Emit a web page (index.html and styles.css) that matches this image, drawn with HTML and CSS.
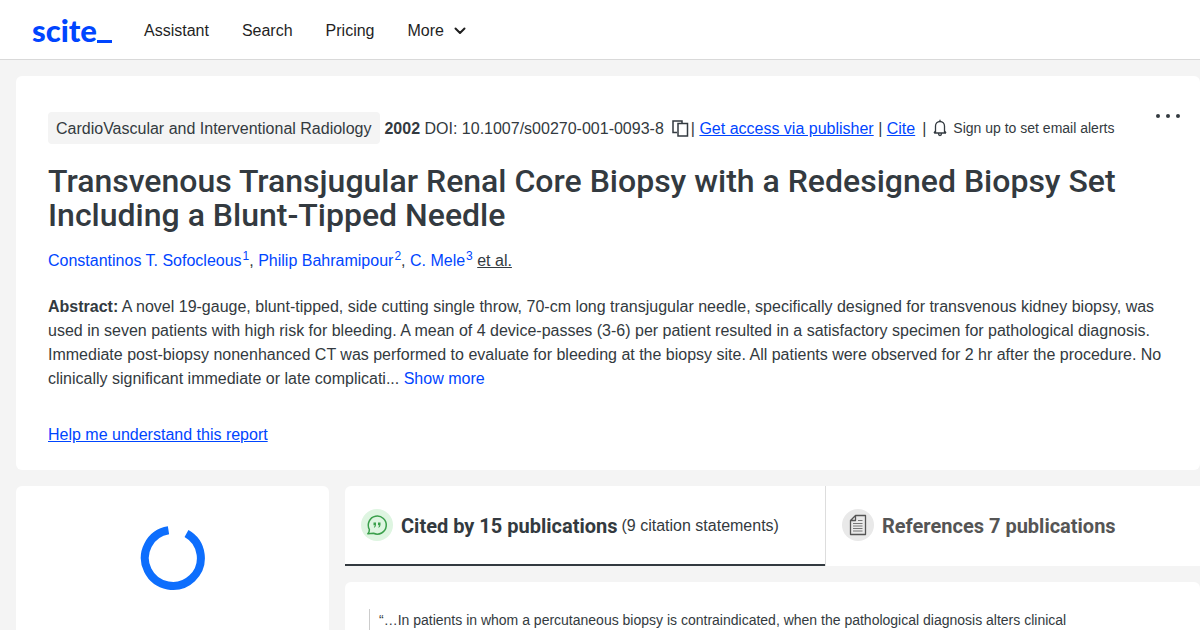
FILE: index.html
```html
<!DOCTYPE html>
<html lang="en">
<head>
  <meta charset="UTF-8" />
  <meta name="viewport" content="width=device-width, initial-scale=1.0"/>
  <title>Transvenous Transjugular Renal Core Biopsy - scite</title>
  <link rel="stylesheet" href="styles.css">
</head>
<body>
  <header class="navbar">
    <a class="logo" href="#">scite<span class="logo-bar"></span></a>
    <nav class="nav-links">
      <a href="#">Assistant</a>
      <a href="#">Search</a>
      <a href="#">Pricing</a>
      <button type="button" class="more">More
        <svg width="12" height="8" viewBox="0 0 12 8" fill="none" stroke="currentColor" stroke-width="2" stroke-linecap="round" stroke-linejoin="round"><path d="M1.5 1.5L6 6l4.500-4.500"/></svg>
      </button>
    </nav>
  </header>

  <main class="page">
    <article class="card paper">
      <div class="paper-top">
        <div class="meta">
          <a class="journal" href="#">CardioVascular and Interventional Radiology</a>
          <span><b>2002</b> DOI: 10.1007/s00270-001-0093-8</span>
          <button type="button" class="copy" aria-label="Copy DOI">
            <svg width="17" height="17" viewBox="0 0 17 17" fill="none" stroke="currentColor" stroke-width="1.500"><path d="M5 12.500H1V1h9v2.500"/><path d="M6 3.500h9.500V16H6z"/></svg>
          </button>
          <span>| <a class="link" href="#">Get access via publisher</a> | <a class="link" href="#">Cite</a></span>
          <span class="divider">|</span>
          <button type="button" class="alerts">
            <svg width="14" height="18" viewBox="0 0 14 18" fill="none" stroke="currentColor" stroke-width="1.300"><path d="M7 2.500V.8M1 14h12M2.500 14V7a4.500 4.500 0 0 1 9 0v7M1 14l1.500-2M13 14l-1.500-2M5.500 14.500a1.500 2 0 0 0 3 0"/></svg>
            Sign up to set email alerts
          </button>
        </div>
        <button type="button" class="dots" aria-label="More options">
          <svg width="24" height="4" viewBox="0 0 24 4" fill="currentColor"><circle cx="2" cy="2" r="2"/><circle cx="12" cy="2" r="2"/><circle cx="22" cy="2" r="2"/></svg>
        </button>
      </div>

      <h1>Transvenous Transjugular Renal Core Biopsy with a Redesigned Biopsy Set Including a Blunt-Tipped Needle</h1>

      <p class="authors">
        <a href="#">Constantinos T. Sofocleous<sup>1</sup></a>, <a href="#">Philip Bahramipour<sup>2</sup></a>, <a href="#">C. Mele<sup>3</sup></a> <button type="button" class="et-al">et al.</button>
      </p>

      <p class="abstract"><b>Abstract:</b> A novel 19-gauge, blunt-tipped, side cutting single throw, 70-cm long transjugular needle, specifically designed for transvenous kidney biopsy, was used in seven patients with high risk for bleeding. A mean of 4 device-passes (3-6) per patient resulted in a satisfactory specimen for pathological diagnosis. Immediate post-biopsy nonenhanced CT was performed to evaluate for bleeding at the biopsy site. All patients were observed for 2 hr after the procedure. No clinically significant immediate or late complicati... <button type="button" class="show-more">Show more</button></p>

      <a class="link help" href="#">Help me understand this report</a>
    </article>

    <div class="columns">
      <aside class="card sidebar">
        <svg class="spinner" width="66" height="66" viewBox="0 0 66 66" fill="none" stroke="#0d6efd" stroke-width="8"><path d="M28.500 5.300A28 28 0 1 0 46.500 8.500"/></svg>
      </aside>

      <section class="results">
        <div class="tabs">
          <button type="button" class="tab active">
            <svg width="32" height="32" viewBox="0 0 32 32" fill="none"><circle cx="16" cy="16" r="16" fill="#def5e1"/><path d="M8.400 20.500A9 9 0 1 1 12.500 24.300L6.800 24.800Q8.500 23 8.400 20.500z" stroke="#3a9f4b" stroke-width="1.500" stroke-linejoin="round"/><path d="M12.500 13.500h2.500v2.500q-.2 2-1.800 2.700l-.4-.6q1-.7 1-1.900h-1.300zM17 13.500h2.500v2.500q-.2 2-1.800 2.700l-.4-.6q1-.7 1-1.900H17z" fill="#3a9f4b"/></svg>
            <span class="tab-title">Cited by 15 publications</span>
            <span class="tab-note">(9 citation statements)</span>
          </button>
          <button type="button" class="tab">
            <svg width="32" height="32" viewBox="0 0 32 32" fill="none"><circle cx="16" cy="16" r="16" fill="#e9e9e9"/><path d="M13.500 6.500h10v19h-15v-14zV11.500h-5" stroke="#555" stroke-width="1.300" stroke-linejoin="round"/><path d="M16 11.500h4.500M11 14.500h9.500M11 17h9.500M11 19.500h9.500M11 22h9.500" stroke="#777"/></svg>
            <span class="tab-title">References 7 publications</span>
          </button>
        </div>
        <div class="card statement">
          <blockquote>“…In patients in whom a percutaneous biopsy is contraindicated, when the pathological diagnosis alters clinical</blockquote>
        </div>
      </section>
    </div>
  </main>
</body>
</html>
```
FILE: styles.css
```css
* {
  box-sizing: border-box;
}

body {
  margin: 0;
  background: #f4f4f4;
  color: #333a40;
  font-family: "Liberation Sans", Arial, sans-serif;
  font-size: 16px;
  line-height: 24px;
}

button {
  padding: 0;
  border: none;
  background: none;
  color: inherit;
  font: inherit;
  cursor: pointer;
}

a {
  color: inherit;
  text-decoration: none;
}

.navbar {
  display: flex;
  align-items: center;
  gap: 32px;
  height: 60px;
  padding: 0 32px;
  background: #fff;
  border-bottom: 1px solid #d9d9d9;
}

.logo {
  display: flex;
  align-items: flex-end;
  color: #0045ff;
  font-family: Lato, sans-serif;
  font-size: 31px;
  font-weight: 900;
  line-height: 26px;
}

.logo-bar {
  width: 15px;
  height: 3px;
  background: #0045ff;
}

.nav-links {
  display: flex;
  gap: 33px;
  padding-top: 2px;
  color: #1f1f1f;
}

.more {
  display: flex;
  align-items: center;
  gap: 10px;
}

.page {
  padding: 16px 0 0 16px;
}

.card {
  background: #fff;
  border-radius: 6px;
}

.paper {
  padding: 32px 32px 23px;
}

.paper-top {
  display: flex;
  align-items: flex-start;
  justify-content: space-between;
}

.meta {
  display: flex;
  align-items: center;
  gap: 4px;
  padding-top: 4px;
  white-space: nowrap;
}

.meta span {
  padding-top: 2px;
}

.journal {
  padding: 5px 9px 3px 8px;
  border-radius: 4px;
  background: #f4f4f4;
}

.copy {
  display: flex;
  margin: 0 -2px 0 4px;
}

.link {
  color: #0045ff;
  text-decoration: underline;
}

.divider {
  margin: 0 3px;
}

.alerts {
  display: flex;
  align-items: center;
  gap: 6px;
  font-size: 14px;
}

.dots {
  display: flex;
  margin-right: -12px;
  padding: 6px 0;
}

h1 {
  margin: 20px 0 17px;
  font-family: Roboto, sans-serif;
  font-size: 32px;
  font-weight: 500;
  line-height: 34px;
}

.authors {
  margin: 0 0 22px;
}

.authors a,
.show-more {
  color: #0045ff;
}

sup {
  margin-left: 1px;
  font-size: 12px;
  line-height: 0;
}

.et-al {
  text-decoration: underline;
}

.abstract {
  margin: 0 0 32px;
}

.columns {
  display: grid;
  grid-template-columns: 313px 1fr;
  gap: 16px;
  margin-top: 16px;
}

.sidebar {
  display: flex;
  justify-content: center;
  padding: 39px 0;
}

.tabs {
  display: grid;
  grid-template-columns: 480px 1fr;
  overflow: hidden;
  border-radius: 6px 0 0 0;
  background: #fff;
}

.tab {
  display: flex;
  align-items: center;
  height: 80px;
  padding: 0 16px;
  color: #555;
  border-left: 1px solid #ddd;
}

.tab.active {
  color: #333a40;
  border-left: none;
  box-shadow: inset 0 -2px #333a40;
}

.tab-title {
  margin: 0 4px 0 8px;
  font-family: Roboto, sans-serif;
  font-size: 20px;
  font-weight: 700;
}

.tab svg {
  margin-bottom: 2px;
}

.tab span {
  padding-bottom: 1px;
}

.statement {
  margin-top: 16px;
  padding: 27px 24px;
}

blockquote {
  margin: 0;
  padding-left: 9px;
  border-left: 1px solid #ccc;
  font-size: 14px;
  line-height: 22px;
}
```
